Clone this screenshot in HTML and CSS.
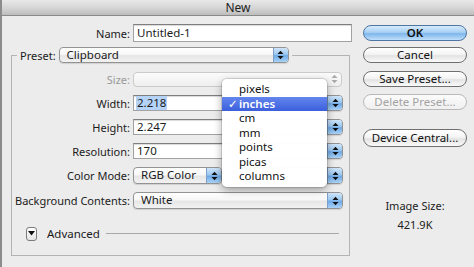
FILE: index.html
```html
<!DOCTYPE html>
<html>
<head>
<meta charset="utf-8">
<link rel="stylesheet" href="styles.css">
</head>
<body>
<div class="dialog">
  <div class="titlebar">New</div>
  <div class="main">
    <div class="left">
      <div class="row name-row">
        <label class="lbl name-lbl">Name:</label>
        <div class="input name-input">Untitled-1</div>
      </div>
      <div class="group">
        <div class="group-head">
          <span class="head-lbl">Preset:</span>
          <div class="select preset-select"><span class="val">Clipboard</span><span class="step"><svg width="7" height="10" viewBox="0 0 7 10"><path d="M0.5 4 L3.5 0.8 L6.5 4 Z M0.5 6 L3.5 9.2 L6.5 6 Z" fill="#111"/></svg></span></div>
        </div>
        <div class="row">
          <label class="lbl disabled">Size:</label>
          <div class="select disabled-select size-select"><span class="val"></span><span class="step gray"><svg width="7" height="10" viewBox="0 0 7 10"><path d="M0.5 4 L3.5 0.8 L6.5 4 Z M0.5 6 L3.5 9.2 L6.5 6 Z" fill="#aaa"/></svg></span></div>
        </div>
        <div class="row">
          <label class="lbl">Width:</label>
          <div class="input num-input"><span class="sel-text">2.218</span></div>
          <div class="select unit-select"><span class="val"></span><span class="step"><svg width="7" height="10" viewBox="0 0 7 10"><path d="M0.5 4 L3.5 0.8 L6.5 4 Z M0.5 6 L3.5 9.2 L6.5 6 Z" fill="#111"/></svg></span></div>
        </div>
        <div class="row">
          <label class="lbl">Height:</label>
          <div class="input num-input">2.247</div>
          <div class="select unit-select"><span class="val"></span><span class="step"><svg width="7" height="10" viewBox="0 0 7 10"><path d="M0.5 4 L3.5 0.8 L6.5 4 Z M0.5 6 L3.5 9.2 L6.5 6 Z" fill="#111"/></svg></span></div>
        </div>
        <div class="row">
          <label class="lbl">Resolution:</label>
          <div class="input num-input">170</div>
          <div class="select unit-select"><span class="val"></span><span class="step"><svg width="7" height="10" viewBox="0 0 7 10"><path d="M0.5 4 L3.5 0.8 L6.5 4 Z M0.5 6 L3.5 9.2 L6.5 6 Z" fill="#111"/></svg></span></div>
        </div>
        <div class="row tall">
          <label class="lbl">Color Mode:</label>
          <div class="select mode-select"><span class="val">RGB Color</span><span class="step"><svg width="7" height="10" viewBox="0 0 7 10"><path d="M0.5 4 L3.5 0.8 L6.5 4 Z M0.5 6 L3.5 9.2 L6.5 6 Z" fill="#111"/></svg></span></div>
          <div class="select unit-select"><span class="val"></span><span class="step"><svg width="7" height="10" viewBox="0 0 7 10"><path d="M0.5 4 L3.5 0.8 L6.5 4 Z M0.5 6 L3.5 9.2 L6.5 6 Z" fill="#111"/></svg></span></div>
        </div>
        <div class="row tall">
          <label class="lbl">Background Contents:</label>
          <div class="select bg-select"><span class="val">White</span><span class="step"><svg width="7" height="10" viewBox="0 0 7 10"><path d="M0.5 4 L3.5 0.8 L6.5 4 Z M0.5 6 L3.5 9.2 L6.5 6 Z" fill="#111"/></svg></span></div>
        </div>
        <div class="adv-row">
          <span class="disclosure"><svg width="7" height="5" viewBox="0 0 7 5"><path d="M0 0 L7 0 L3.5 4.5 Z" fill="#111"/></svg></span>
          <span class="adv-lbl">Advanced</span>
          <span class="adv-line"></span>
        </div>
      </div>
    </div>
    <div class="right">
      <div class="btn default">OK</div>
      <div class="btn cancel">Cancel</div>
      <div class="btn save">Save Preset...</div>
      <div class="btn del disabled-btn">Delete Preset...</div>
      <div class="btn device">Device Central...</div>
      <div class="img-size">
        <div>Image Size:</div>
        <div class="img-val">421.9K</div>
      </div>
    </div>
  </div>
  <div class="menu">
    <div class="item">pixels</div>
    <div class="item active"><span class="check">✓</span>inches</div>
    <div class="item">cm</div>
    <div class="item">mm</div>
    <div class="item">points</div>
    <div class="item">picas</div>
    <div class="item">columns</div>
  </div>
</div>
</body>
</html>
```

FILE: styles.css
```css
html, body {
  margin: 0;
  padding: 0;
}
body {
  width: 474px;
  height: 267px;
  overflow: hidden;
  background: #ebebeb;
  font-family: "Noto Sans", "DejaVu Sans", sans-serif;
  font-size: 11px;
  color: #1b1b1b;
}
.dialog {
  position: relative;
  width: 474px;
  height: 267px;
  box-sizing: border-box;
  border-left: 2px solid #8c8c8c;
  background: #ececec;
}
.titlebar {
  height: 15px;
  line-height: 16px;
  border-bottom: 1px solid #8a8a8a;
  background: linear-gradient(#e9e9e9, #d2d2d2 60%, #bdbdbd);
  text-align: center;
  font-size: 12px;
  color: #222;
}
.main {
  display: flex;
  gap: 11px;
}
.left {
  width: 350px;
}
.row {
  display: flex;
  align-items: center;
  height: 16px;
  margin-top: 8px;
}
.row.tall {
  height: 17px;
}
.lbl {
  width: 118px;
  flex: none;
  text-align: right;
  padding-right: 3px;
  white-space: nowrap;
}
.lbl.disabled {
  color: #9a9a9a;
}
.name-row {
  margin-top: 8px;
  height: 18px;
}
.name-lbl {
  width: 128px;
}
.input {
  box-sizing: border-box;
  height: 16px;
  background: #fff;
  border: 1px solid #a2a2a2;
  border-top-color: #7e7e7e;
  box-shadow: inset 0 1px 1px rgba(0,0,0,0.15);
  padding: 0 3px;
  font-size: 11.5px;
  line-height: 14px;
  white-space: nowrap;
  overflow: hidden;
}
.name-input {
  width: 219px;
  height: 18px;
  line-height: 16px;
}
.num-input {
  width: 97px;
  margin-right: 6px;
}
.sel-text {
  background: #b4d3f7;
  padding: 0 1px;
  margin-left: -1px;
}
.group {
  margin-left: 9px;
  margin-top: 13px;
  width: 339px;
  height: 201px;
  box-sizing: border-box;
  border: 1px solid #b3b3b3;
  display: flex;
  flex-direction: column;
}
.group-head {
  display: flex;
  align-items: center;
  margin-top: -9px;
  margin-left: 5px;
  padding: 0 3px;
  background: #ececec;
  align-self: flex-start;
  height: 16px;
}
.head-lbl {
  margin-right: 3px;
}
.select {
  box-sizing: border-box;
  display: flex;
  align-items: stretch;
  height: 16px;
  border: 1px solid #939393;
  border-radius: 4px;
  background: linear-gradient(#ffffff, #f7f7f7 45%, #e6e6e6 55%, #f2f2f2);
  box-shadow: 0 1px 1px rgba(0,0,0,0.12);
  overflow: hidden;
  font-size: 11.5px;
  white-space: nowrap;
}
.row.tall .select {
  height: 17px;
}
.val {
  flex: 1;
  padding-left: 7px;
  line-height: 14px;
  overflow: hidden;
}
.step {
  width: 14px;
  flex: none;
  display: flex;
  align-items: center;
  justify-content: center;
  border-left: 1px solid #7d9ec6;
  background: linear-gradient(#cfe5fa, #9cc8f1 45%, #6fa9e6 55%, #a9d3f7);
}
.step.gray {
  background: transparent;
  border-left: none;
}
.preset-select {
  width: 230px;
  height: 16px;
}
.disabled-select {
  border-color: #cbcbcb;
  box-shadow: none;
  background: linear-gradient(#fbfbfb, #efefef);
}
.size-select {
  width: 209px;
  height: 15px;
}
.unit-select {
  width: 107px;
}
.mode-select {
  width: 89px;
  margin-right: 14px;
}
.bg-select {
  width: 210px;
}
.adv-row {
  display: flex;
  align-items: center;
  margin-top: 17px;
  margin-left: 14px;
  height: 15px;
}
.disclosure {
  box-sizing: border-box;
  width: 11px;
  height: 14px;
  border: 1px solid #7c7c7c;
  border-radius: 3px;
  background: linear-gradient(#ffffff, #e4e4e4);
  display: flex;
  align-items: center;
  justify-content: center;
}
.adv-lbl {
  margin-left: 10px;
  font-size: 11.5px;
}
.adv-line {
  flex: none;
  width: 233px;
  height: 1px;
  margin-left: 6px;
  background: #a9a9a9;
}
.right {
  width: 104px;
  display: flex;
  flex-direction: column;
}
.btn {
  box-sizing: border-box;
  height: 16px;
  border: 1px solid #6f6f6f;
  border-radius: 9px;
  background: linear-gradient(#ffffff, #f4f4f4 45%, #e3e3e3 55%, #fafafa);
  text-align: center;
  line-height: 14px;
  font-size: 11.5px;
  color: #111;
}
.btn.default {
  margin-top: 9px;
  border-color: #4f76a3;
  background: linear-gradient(#d6eafc, #a9d0f4 45%, #7fb6ec 55%, #bfe0fb);
  font-weight: 600;
}
.btn.cancel {
  margin-top: 6px;
}
.btn.save {
  margin-top: 8px;
}
.btn.del {
  margin-top: 7px;
}
.disabled-btn {
  border-color: #b9b9b9;
  color: #a3a3a3;
  background: linear-gradient(#fbfbfb, #f0f0f0);
}
.btn.device {
  margin-top: 19px;
  height: 18px;
  line-height: 16px;
}
.img-size {
  margin-top: 52px;
  text-align: center;
  line-height: 13px;
  color: #222;
}
.img-val {
  margin-top: 6px;
}
.menu {
  position: absolute;
  left: 220px;
  top: 79px;
  width: 105px;
  height: 108px;
  box-sizing: border-box;
  padding-top: 3px;
  background: rgba(255,255,255,0.98);
  border-radius: 5px;
  box-shadow: 0 3px 9px rgba(0,0,0,0.35), 0 0 0 1px rgba(0,0,0,0.12);
  font-size: 11.5px;
}
.item {
  position: relative;
  height: 14.5px;
  line-height: 14.5px;
  padding-left: 17px;
  color: #111;
}
.item.active {
  background: linear-gradient(#6486ee, #3b5fdc);
  color: #fff;
  font-weight: 600;
}
.check {
  position: absolute;
  left: 6px;
  top: 0;
  font-weight: 700;
}
```
